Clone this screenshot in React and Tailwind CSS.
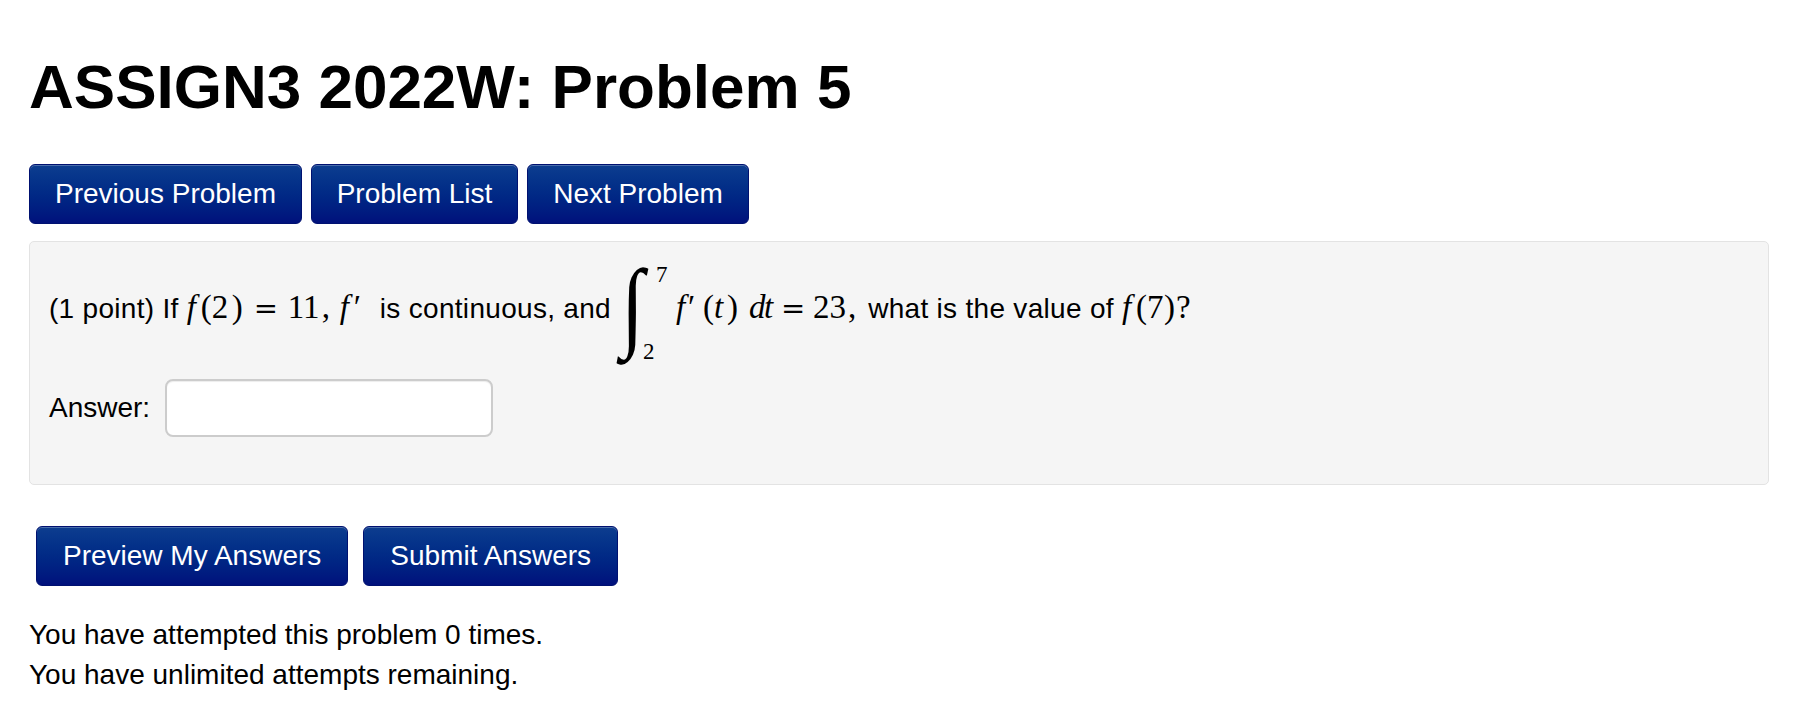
export default function App() {
  const btn =
    "h-[60px] rounded-[6px] text-white text-[28px] leading-none bg-gradient-to-b from-[#0d3d8f] to-[#00107c] border border-[#001170] shadow-[inset_0_1px_0_rgba(255,255,255,0.25)]";
  const serif = "font-['Liberation_Serif',serif] text-[33px]";
  const eq = "inline-block font-['DejaVu_Sans',sans-serif] text-[29px]";
  return (
    <div className="min-h-screen bg-white px-[29px] text-black font-['Liberation_Sans',Arial,sans-serif]">
      <h1 className="pt-[53px] text-[62px] leading-[68px] font-bold">ASSIGN3 2022W: Problem 5</h1>

      <div className="mt-[43px] flex gap-[9px]">
        <button className={btn + " w-[273px]"}>Previous Problem</button>
        <button className={btn + " w-[207px]"}>Problem List</button>
        <button className={btn + " w-[222px]"}>Next Problem</button>
      </div>

      <div className="mt-[17px] rounded-[5px] border border-[#e3e3e3] bg-[#f5f5f5] pt-[45px] pb-[47px] pl-[19px]">
        <div className="text-[28px] leading-[40px] whitespace-nowrap tracking-[0.3px]">
          (1 point) If{" "}
          <span className={serif + " tracking-normal"}>
            <span className="inline-block w-[14px] italic">f</span>
            <span className="inline-block w-[11px]">(</span>
            <span className="inline-block w-[18px]">2</span>
            <span className="inline-block w-[16px] pl-[2px]">)</span>
            <span className={eq + " w-[42px] pl-[8px]"}>=</span>
            <span className="inline-block w-[34px]">11</span>
            <span className="inline-block w-[18px]">,</span>
            <span className="inline-block w-[14px] italic">f</span>
            <span className="inline-block w-[18px]">′</span>
          </span>{" "}
          is continuous, and{" "}
          <span className="relative inline-block w-[57px]">
            {"\u00a0"}
            <span className="absolute left-[2px] top-[-26px] origin-center scale-y-[1.18] font-['Liberation_Serif',serif] text-[84px] leading-none italic">
              ∫
            </span>
            <span className="absolute left-[37px] top-[-26px] font-['Liberation_Serif',serif] text-[23px] leading-none">
              7
            </span>
            <span className="absolute left-[24px] top-[51px] font-['Liberation_Serif',serif] text-[23px] leading-none">
              2
            </span>
          </span>
          <span className={serif + " tracking-normal"}>
            <span className="inline-block w-[12px] italic">f</span>
            <span className="inline-block w-[15px]">′</span>
            <span className="inline-block w-[11px]">(</span>
            <span className="inline-block w-[13px] italic">t</span>
            <span className="inline-block w-[22px]">)</span>
            <span className="inline-block w-[15px] italic">d</span>
            <span className="inline-block w-[12px] italic">t</span>
            <span className={eq + " w-[37px] pl-[5px]"}>=</span>
            <span className="inline-block w-[35px]">23</span>
            <span className="inline-block w-[12px]">,</span>
          </span>{" "}
          what is the value of{" "}
          <span className={serif + " tracking-normal"}>
            <span className="inline-block w-[14px] italic">f</span>
            <span className="inline-block w-[11px]">(</span>
            <span className="inline-block w-[17px]">7</span>
            <span className="inline-block w-[12px]">)</span>
            <span className="inline-block">?</span>
          </span>
        </div>

        <div className="mt-[50px] flex items-center gap-[15px] text-[28px]">
          <span>Answer:</span>
          <input
            type="text"
            className="h-[58px] w-[328px] rounded-[8px] border-2 border-[#cccccc] bg-white shadow-[inset_0_1px_1px_rgba(0,0,0,0.075)] outline-none"
          />
        </div>
      </div>

      <div className="mt-[41px] ml-[7px] flex gap-[15px]">
        <button className={btn + " h-[59px] px-[26px]"}>Preview My Answers</button>
        <button className={btn + " h-[59px] px-[26px]"}>Submit Answers</button>
      </div>

      <div className="mt-[29px] text-[28px] leading-[40px]">
        <div>You have attempted this problem 0 times.</div>
        <div>You have unlimited attempts remaining.</div>
      </div>
    </div>
  );
}
